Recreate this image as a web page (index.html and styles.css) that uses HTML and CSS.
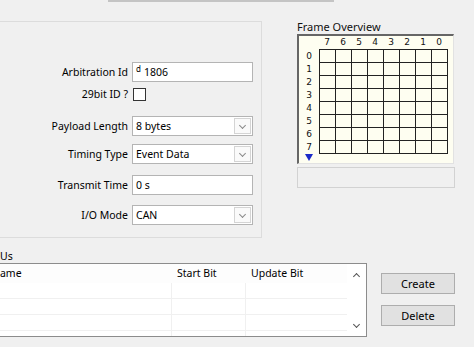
FILE: index.html
```html
<!DOCTYPE html>
<html>
<head>
    <meta charset="utf-8">
    <title>Frame Editor</title>
    <link rel="stylesheet" href="styles.css">
</head>
<body>
    <div class="tab-edge"></div>

    <div class="top">
        <div class="group">
            <div class="row row-arb">
                <span class="label">Arbitration Id</span>
                <div class="field"><sup>d</sup>1806</div>
            </div>
            <div class="row row-chk">
                <span class="label">29bit ID ?</span>
                <span class="check"></span>
            </div>
            <div class="row row-payload">
                <span class="label">Payload Length</span>
                <div class="field combo">8 bytes<span class="drop"></span></div>
            </div>
            <div class="row row-timing">
                <span class="label">Timing Type</span>
                <div class="field combo">Event Data<span class="drop"></span></div>
            </div>
            <div class="row row-transmit">
                <span class="label">Transmit Time</span>
                <div class="field">0 s</div>
            </div>
            <div class="row row-io">
                <span class="label">I/O Mode</span>
                <div class="field combo">CAN<span class="drop"></span></div>
            </div>
        </div>

        <div class="overview">
            <div class="ov-title">Frame Overview</div>
            <div class="ov-box">
                <div class="corner"></div>
                <div class="bit-heads">
                    <span>7</span><span>6</span><span>5</span><span>4</span>
                    <span>3</span><span>2</span><span>1</span><span>0</span>
                </div>
                <div class="byte-heads">
                    <span>0</span><span>1</span><span>2</span><span>3</span>
                    <span>4</span><span>5</span><span>6</span><span>7</span>
                </div>
                <div class="bits" id="bits"></div>
                <div class="marker"></div>
            </div>
            <div class="ov-status"></div>
        </div>
    </div>

    <div class="section-title">Us</div>

    <div class="bottom">
        <div class="list">
            <div class="list-body">
                <div class="list-row head">
                    <span class="c-name">Name</span>
                    <span class="c-start">Start Bit</span>
                    <span class="c-update">Update Bit</span>
                </div>
                <div class="list-row"><span class="c-name"></span><span class="c-start"></span><span class="c-update"></span></div>
                <div class="list-row"><span class="c-name"></span><span class="c-start"></span><span class="c-update"></span></div>
                <div class="list-row"><span class="c-name"></span><span class="c-start"></span><span class="c-update"></span></div>
                <div class="list-row"><span class="c-name"></span><span class="c-start"></span><span class="c-update"></span></div>
            </div>
            <div class="scroll">
                <span class="arrow up"></span>
                <span class="arrow down"></span>
            </div>
        </div>
        <div class="buttons">
            <button>Create</button>
            <button>Delete</button>
        </div>
    </div>

    <script>
        // 8 bytes x 8 bits
        var bits = document.getElementById('bits');
        for (var i = 0; i < 64; i++) {
            bits.appendChild(document.createElement('span'));
        }
    </script>
</body>
</html>
```

FILE: styles.css
```css
*, *::before, *::after {
    box-sizing: border-box;
}

body {
    margin: 0;
    width: 474px;
    height: 347px;
    overflow: hidden;
    background: #f0f0f0;
    color: #000;
    font-family: "Noto Sans", "Open Sans", sans-serif;
    font-size: 10.5px;
}

.tab-edge {
    margin-left: 108px;
    width: 226px;
    height: 2px;
    background: #c4c4c4;
}

.top {
    display: flex;
    align-items: flex-start;
}

.group {
    margin: 19px 0 0 -10px;
    width: 272px;
    padding: 40px 0 12px 0;
    border: 1px solid #dcdcdc;
}

.row {
    display: flex;
    align-items: center;
    height: 20px;
}

.row-chk { height: 16px; margin-top: 4px; }
.row-payload { margin-top: 14px; }
.row-timing { margin-top: 8px; }
.row-transmit { margin-top: 11px; }
.row-io { margin-top: 10px; }

.label {
    width: 141px;
    padding-right: 4px;
    text-align: right;
    white-space: nowrap;
}

.field {
    position: relative;
    width: 121px;
    height: 20px;
    line-height: 18px;
    padding-left: 3px;
    background: #fff;
    border: 1px solid #b4b4b4;
}

.field sup {
    font-size: 8px;
    line-height: 0;
    vertical-align: 4px;
    margin-right: 3px;
}

.drop {
    position: absolute;
    top: 1px;
    right: 1px;
    width: 17px;
    height: 16px;
    border: 1px solid #d4d4d4;
    background: #fafafa;
}

.drop::after {
    content: "";
    position: absolute;
    left: 5px;
    top: 4px;
    width: 5px;
    height: 5px;
    border-right: 1px solid #8a8a8a;
    border-bottom: 1px solid #8a8a8a;
    transform: rotate(45deg);
}

.check {
    width: 13px;
    height: 13px;
    margin-left: 1px;
    background: #fff;
    border: 1px solid #333;
}

/* frame overview */
.overview {
    margin-left: 35px;
    padding-top: 17px;
    width: 158px;
}

.ov-title {
    line-height: 15px;
    font-size: 11px;
    color: #111;
}

.ov-box {
    display: grid;
    grid-template-columns: 20px 129px;
    grid-template-rows: 13px 105px 9px;
    width: 157px;
    background: #fefef1;
    border-top: 2px solid #666;
    border-left: 2px solid #666;
    border-right: 1px solid #e2e2e2;
    border-bottom: 1px solid #e2e2e2;
    font-family: "DejaVu Sans", sans-serif;
    font-size: 9px;
    color: #111;
}

.bit-heads {
    display: grid;
    grid-template-columns: repeat(8, 16px);
    line-height: 13px;
    text-align: center;
}

.byte-heads {
    display: grid;
    grid-template-rows: repeat(8, 13px);
    line-height: 14px;
    text-align: center;
}

.bits {
    display: grid;
    grid-template-columns: repeat(8, 16px);
    grid-template-rows: repeat(8, 13px);
    width: 129px;
    height: 105px;
    border-top: 1px solid #222;
    border-left: 1px solid #222;
}

.bits span {
    border-right: 1px solid #222;
    border-bottom: 1px solid #222;
}

.marker {
    grid-column: 1;
    width: 0;
    height: 0;
    margin: 0 0 0 6px;
    border-left: 4px solid transparent;
    border-right: 4px solid transparent;
    border-top: 7px solid #1c2bc8;
}

.ov-status {
    margin-top: 3px;
    height: 21px;
    border: 1px solid #d2d2d2;
    background: #f0f0f0;
}

/* signals list */
.section-title {
    margin-top: 11px;
    line-height: 14px;
}

.bottom {
    display: flex;
    align-items: flex-start;
}

.list {
    display: flex;
    margin-left: -14px;
    width: 381px;
    height: 74px;
    background: #fff;
    border: 1px solid #8c8c8c;
}

.list-body {
    flex: 1;
    overflow: hidden;
}

.list-row {
    display: flex;
    height: 16px;
    border-bottom: 1px solid #f0f0f0;
}

.list-row.head {
    height: 19px;
    line-height: 18px;
    border-bottom: none;
    background: #fdfdfd;
}

.list-row span {
    padding-left: 5px;
    border-right: 1px solid #f0f0f0;
}

.list-row.head span {
    border-right-color: transparent;
}

.c-name { width: 185px; }
.c-start { width: 74px; padding-left: 4px; }
.c-update { width: 100px; border-right: none !important; }

.scroll {
    position: relative;
    width: 19px;
    background: #fff;
}

.arrow {
    position: absolute;
    left: 7px;
    width: 5px;
    height: 5px;
    border-left: 1px solid #555;
    border-top: 1px solid #555;
}

.arrow.up { top: 10px; transform: rotate(45deg); }
.arrow.down { bottom: 9px; transform: rotate(225deg); }

.buttons {
    display: flex;
    flex-direction: column;
    gap: 11px;
    margin: 10px 0 0 14px;
}

button {
    width: 74px;
    height: 21px;
    padding: 0;
    font-family: inherit;
    font-size: 11px;
    color: #000;
    background: #e1e1e1;
    border: 1px solid #adadad;
    border-radius: 0;
}
```
